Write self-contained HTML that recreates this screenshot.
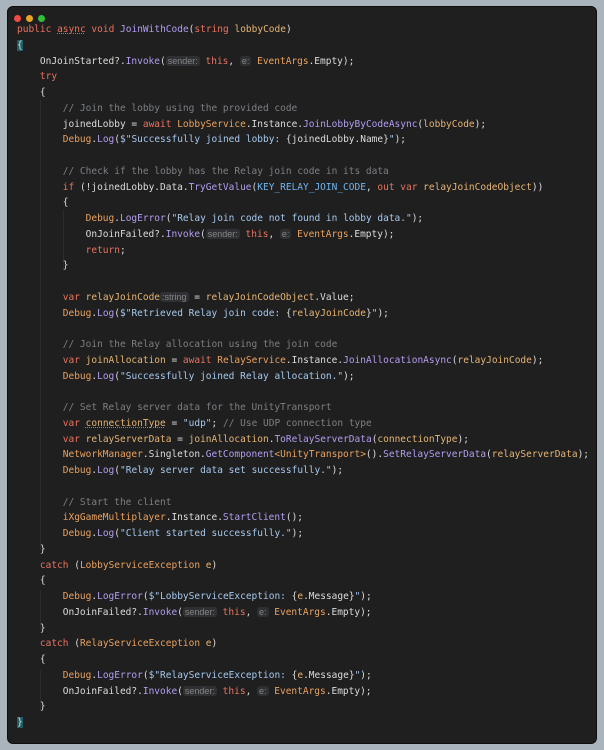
<!DOCTYPE html>
<html><head><meta charset="utf-8"><style>
html,body{margin:0;padding:0;}
body{width:604px;height:750px;background:#a9b4bd;position:relative;overflow:hidden;font-family:"DejaVu Sans Mono",monospace;}
.win{position:absolute;left:7px;top:6px;width:590px;height:738px;background:#1f1f1f;border:1px solid #0e0e0e;border-radius:6px;box-sizing:border-box;}
.dot{position:absolute;top:8px;width:7px;height:7px;border-radius:50%;}
pre{position:absolute;left:17px;top:22px;margin:0;font-family:"DejaVu Sans Mono",monospace;font-size:9.5px;line-height:15.75px;color:#dcdcdc;white-space:pre;}
.k{color:#e8735f}.t{color:#eaa15f}.m{color:#b49cf0}.s{color:#a6c8ee}.c{color:#7c7f84}.p{color:#e5b474}.n{color:#70b5f0}
.h{background:#2f3033;color:#858585;font-family:"Liberation Sans",sans-serif;font-size:9px;border-radius:3px;padding:0 2px;}
.br{background:#1f5e66;}
.g{position:absolute;width:1px;background:#2c2c2c;}
.u{text-decoration:underline dotted #4caf50;}
</style></head><body>
<div class="win">
<div class="dot" style="left:6px;background:#ee4b45"></div>
<div class="dot" style="left:18px;background:#e8a524"></div>
<div class="dot" style="left:30px;background:#2fbf3a"></div>
</div>
<div class="g" style="left:40px;top:100px;height:450px"></div>
<div class="g" style="left:63px;top:210px;height:60px"></div>
<div class="g" style="left:40px;top:590px;height:40px"></div>
<div class="g" style="left:40px;top:670px;height:40px"></div>
<pre><span class="k">public</span> <span class="k u">async</span> <span class="k">void</span> <span class="m">JoinWithCode</span>(<span class="k">string</span> <span class="p">lobbyCode</span>)
<span class="br">{</span>
    OnJoinStarted?.<span class="m">Invoke</span>(<span class="h">sender:</span> <span class="k">this</span>, <span class="h">e:</span> <span class="t">EventArgs</span>.Empty);
    <span class="k">try</span>
    {
        <span class="c">// Join the lobby using the provided code</span>
        joinedLobby = <span class="k">await</span> <span class="t">LobbyService</span>.Instance.<span class="m">JoinLobbyByCodeAsync</span>(<span class="p">lobbyCode</span>);
        <span class="t">Debug</span>.<span class="m">Log</span>(<span class="s">$"Successfully joined lobby: </span>{joinedLobby.Name}<span class="s">"</span>);

        <span class="c">// Check if the lobby has the Relay join code in its data</span>
        <span class="k">if</span> (!joinedLobby.Data.<span class="m">TryGetValue</span>(<span class="n">KEY_RELAY_JOIN_CODE</span>, <span class="k">out var</span> <span class="p">relayJoinCodeObject</span>))
        {
            <span class="t">Debug</span>.<span class="m">LogError</span>(<span class="s">"Relay join code not found in lobby data."</span>);
            OnJoinFailed?.<span class="m">Invoke</span>(<span class="h">sender:</span> <span class="k">this</span>, <span class="h">e:</span> <span class="t">EventArgs</span>.Empty);
            <span class="k">return</span>;
        }

        <span class="k">var</span> <span class="p">relayJoinCode</span><span class="h">:string</span> = <span class="p">relayJoinCodeObject</span>.Value;
        <span class="t">Debug</span>.<span class="m">Log</span>(<span class="s">$"Retrieved Relay join code: </span>{<span class="p">relayJoinCode</span>}<span class="s">"</span>);

        <span class="c">// Join the Relay allocation using the join code</span>
        <span class="k">var</span> <span class="p">joinAllocation</span> = <span class="k">await</span> <span class="t">RelayService</span>.Instance.<span class="m">JoinAllocationAsync</span>(<span class="p">relayJoinCode</span>);
        <span class="t">Debug</span>.<span class="m">Log</span>(<span class="s">"Successfully joined Relay allocation."</span>);

        <span class="c">// Set Relay server data for the UnityTransport</span>
        <span class="k">var</span> <span class="p u">connectionType</span> = <span class="s">"udp"</span>; <span class="c">// Use UDP connection type</span>
        <span class="k">var</span> <span class="p">relayServerData</span> = <span class="p">joinAllocation</span>.<span class="m">ToRelayServerData</span>(<span class="p">connectionType</span>);
        <span class="t">NetworkManager</span>.Singleton.<span class="m">GetComponent</span><span class="t">&lt;UnityTransport&gt;</span>().<span class="m">SetRelayServerData</span>(<span class="p">relayServerData</span>);
        <span class="t">Debug</span>.<span class="m">Log</span>(<span class="s">"Relay server data set successfully."</span>);

        <span class="c">// Start the client</span>
        <span class="t">iXgGameMultiplayer</span>.Instance.<span class="m">StartClient</span>();
        <span class="t">Debug</span>.<span class="m">Log</span>(<span class="s">"Client started successfully."</span>);
    }
    <span class="k">catch</span> (<span class="t">LobbyServiceException</span> <span class="p">e</span>)
    {
        <span class="t">Debug</span>.<span class="m">LogError</span>(<span class="s">$"LobbyServiceException: </span>{<span class="p">e</span>.Message}<span class="s">"</span>);
        OnJoinFailed?.<span class="m">Invoke</span>(<span class="h">sender:</span> <span class="k">this</span>, <span class="h">e:</span> <span class="t">EventArgs</span>.Empty);
    }
    <span class="k">catch</span> (<span class="t">RelayServiceException</span> <span class="p">e</span>)
    {
        <span class="t">Debug</span>.<span class="m">LogError</span>(<span class="s">$"RelayServiceException: </span>{<span class="p">e</span>.Message}<span class="s">"</span>);
        OnJoinFailed?.<span class="m">Invoke</span>(<span class="h">sender:</span> <span class="k">this</span>, <span class="h">e:</span> <span class="t">EventArgs</span>.Empty);
    }
<span class="br">}</span></pre>
</body></html>
